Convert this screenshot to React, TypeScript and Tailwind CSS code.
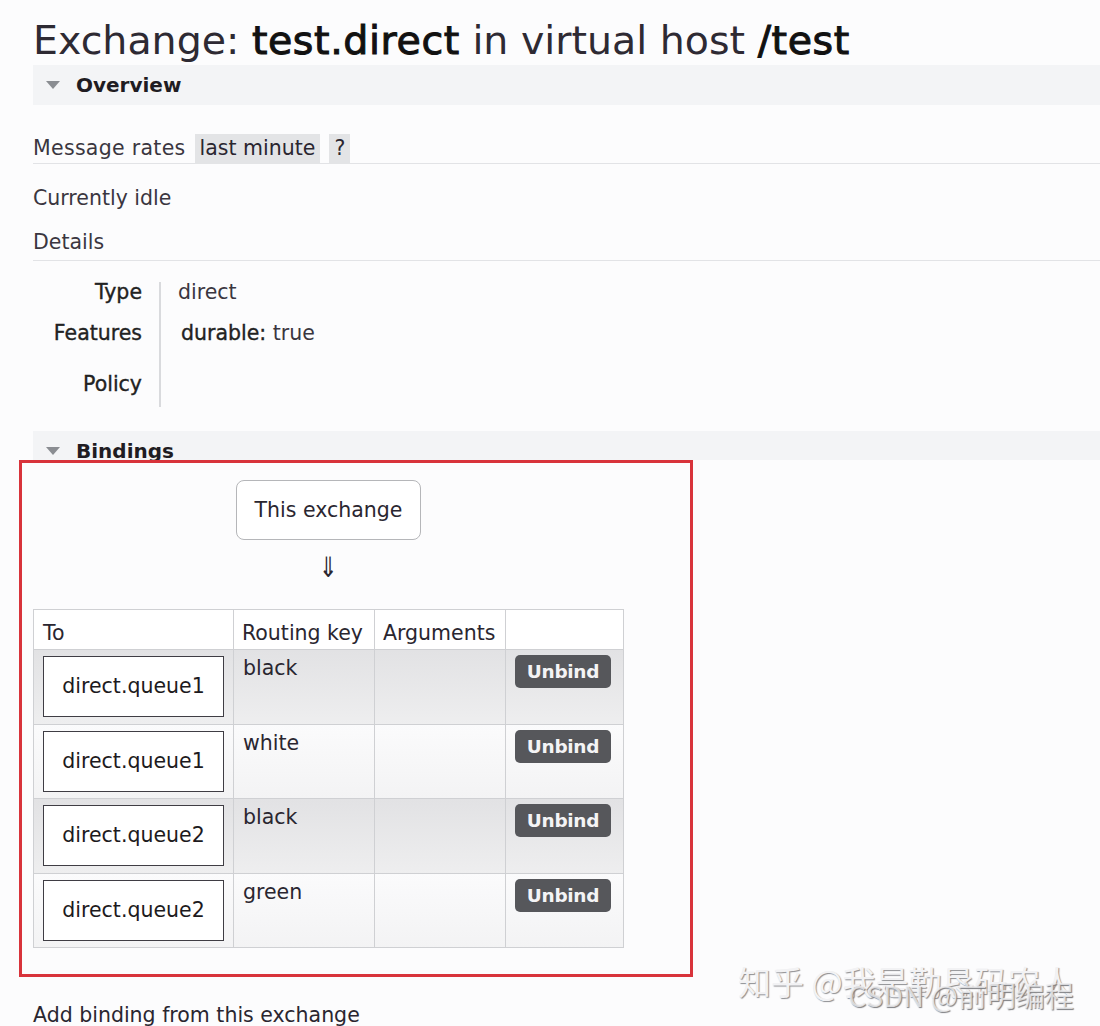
import React from 'react';

const font = { fontFamily: '"DejaVu Sans", Verdana, sans-serif' };
const medium = { WebkitTextStroke: '1px #111', letterSpacing: '0.6px' };
const semi = { WebkitTextStroke: '0.35px currentColor' };

const bindings = [
  { queue: 'direct.queue1', key: 'black', alt: true },
  { queue: 'direct.queue1', key: 'white', alt: false },
  { queue: 'direct.queue2', key: 'black', alt: true },
  { queue: 'direct.queue2', key: 'green', alt: false },
];

function Triangle() {
  return (
    <svg width="16" height="10" viewBox="0 0 16 10" className="shrink-0">
      <path d="M1 1 L15 1 L8 9 Z" fill="#8a8d92" />
    </svg>
  );
}

export default function App() {
  return (
    <div className="w-[1100px] h-[1026px] overflow-hidden bg-[#fcfcfd] text-[#2a2630] relative text-[20.5px]" style={font}>
      {/* Title */}
      <h1 className="pl-[33px] pt-[17px] text-[39.5px] leading-[46px] text-[#2e2a33] whitespace-nowrap">
        Exchange: <span className="text-[#111]" style={medium}>test.direct</span> in virtual host{' '}
        <span className="text-[#111]" style={medium}>/test</span>
      </h1>

      {/* Overview */}
      <div className="ml-[33px] mt-[2px] h-[40px] bg-[#f3f4f6] flex items-center gap-[15px] pl-[12px]">
        <Triangle />
        <span className="font-bold text-[20px] text-[#1f1c22]">Overview</span>
      </div>

      <div className="ml-[33px] mt-[29px] h-[30px] flex items-center border-b border-[#e2e3e6]">
        <span className="text-[#3a3640] tracking-[0.3px]">Message rates</span>
        <span className="ml-[9px] h-[30px] px-[5px] bg-[#e3e4e6] flex items-center">last minute</span>
        <span className="ml-[9px] h-[30px] px-[5px] bg-[#e3e4e6] flex items-center">?</span>
      </div>

      <div className="ml-[33px] mt-[20px] leading-[28px] text-[#3a3640]">Currently idle</div>

      <div className="ml-[33px] mt-[16px] pb-[4px] leading-[28px] text-[#3a3640] border-b border-[#e2e3e6]">Details</div>

      {/* Details table */}
      <div className="ml-[33px] mt-[16px] flex">
        <div className="w-[109px] flex flex-col items-end text-[#222]" style={semi}>
          <div className="h-[30px] leading-[30px]">Type</div>
          <div className="h-[30px] leading-[30px] mt-[11px]">Features</div>
          <div className="h-[30px] leading-[30px] mt-[21px]">Policy</div>
        </div>
        <div className="ml-[17px] w-[2px] h-[125px] bg-[#d9dadd] mt-[5px]" />
        <div className="ml-[17px] flex flex-col text-[#3a3640]">
          <div className="h-[30px] leading-[30px]">direct</div>
          <div className="h-[30px] leading-[30px] mt-[11px] ml-[3px]">
            <span className="text-[#222]" style={semi}>durable:</span> true
          </div>
        </div>
      </div>

      {/* Bindings header */}
      <div className="ml-[33px] mt-[24px] h-[29px] overflow-hidden bg-[#f3f4f6] flex items-start gap-[15px] pl-[12px] pt-[8px]">
        <div className="pt-[7px]">
          <Triangle />
        </div>
        <span className="font-bold text-[20px] leading-[24px] text-[#1f1c22]">Bindings</span>
      </div>

      {/* Highlighted bindings */}
      <div className="ml-[19px] w-[674px] h-[517px] border-[3px] border-[#d8333b] pl-[11px] pt-[17px]">
        <div className="ml-[203px] w-[185px] h-[60px] rounded-[8px] border border-[#b5b6b9] bg-white flex items-center justify-center text-[#2a2630]">
          This exchange
        </div>
        <div
          className="ml-[203px] w-[185px] text-center text-[28px] leading-[32px] mt-[12px] text-[#2a2630]"
          style={{ transform: 'scaleX(0.8)' }}
        >
          ⇓
        </div>

        <table className="mt-[25px] border-collapse">
          <thead>
            <tr className="h-[40px] bg-white">
              <th className="w-[200px] border border-[#cfd0d3] text-left font-normal pl-[9px] pt-[8px] align-middle">To</th>
              <th className="w-[141px] border border-[#cfd0d3] text-left font-normal pl-[8px] pt-[8px]">Routing key</th>
              <th className="w-[131px] border border-[#cfd0d3] text-left font-normal pl-[8px] pt-[8px]">Arguments</th>
              <th className="w-[118px] border border-[#cfd0d3]"></th>
            </tr>
          </thead>
          <tbody>
            {bindings.map((b, i) => (
              <tr
                key={i}
                className={`h-[74.5px] ${b.alt ? 'bg-gradient-to-b from-[#e2e2e4] to-[#eeeeef]' : 'bg-gradient-to-b from-[#fbfbfc] to-[#f3f3f4]'}`}
              >
                <td className="border border-[#cfd0d3] pl-[9px] align-middle">
                  <div className="w-[181px] h-[61px] border-[1.5px] border-[#3f3d44] bg-white flex items-center justify-center text-[#1d1a20]">
                    {b.queue}
                  </div>
                </td>
                <td className="border border-[#cfd0d3] align-top pl-[9px] pt-[3px] text-[#2a2630]">{b.key}</td>
                <td className="border border-[#cfd0d3]"></td>
                <td className="border border-[#cfd0d3] align-top pl-[9px] pt-[5px]">
                  <button className="w-[96px] h-[33px] rounded-[5px] bg-[#56575b] text-[#f4f4f5] font-bold text-[18.5px] leading-[33px] tracking-[-0.3px]">
                    Unbind
                  </button>
                </td>
              </tr>
            ))}
          </tbody>
        </table>
      </div>

      <div className="ml-[33px] mt-[24px] leading-[28px] text-[#2a2630] whitespace-nowrap">Add binding from this exchange</div>

      {/* Watermarks */}
      <div
        className="absolute left-[738px] top-[960px] text-[33px] leading-[42px] text-[#f2f2f4] whitespace-nowrap"
        style={{ fontFamily: '"Noto Sans CJK SC", "DejaVu Sans", sans-serif', textShadow: '1px 1px 1px #8d8e92' }}
      >
        知乎 @我是勤恳码农人
      </div>
      <div
        className="absolute left-[848px] top-[975px] text-[29px] leading-[38px] text-[#f0f0f2]/80 whitespace-nowrap"
        style={{ fontFamily: '"Noto Sans CJK SC", "DejaVu Sans", sans-serif', textShadow: '1px 1px 1px #7d7e82' }}
      >
        CSDN @前明编程
      </div>
    </div>
  );
}
